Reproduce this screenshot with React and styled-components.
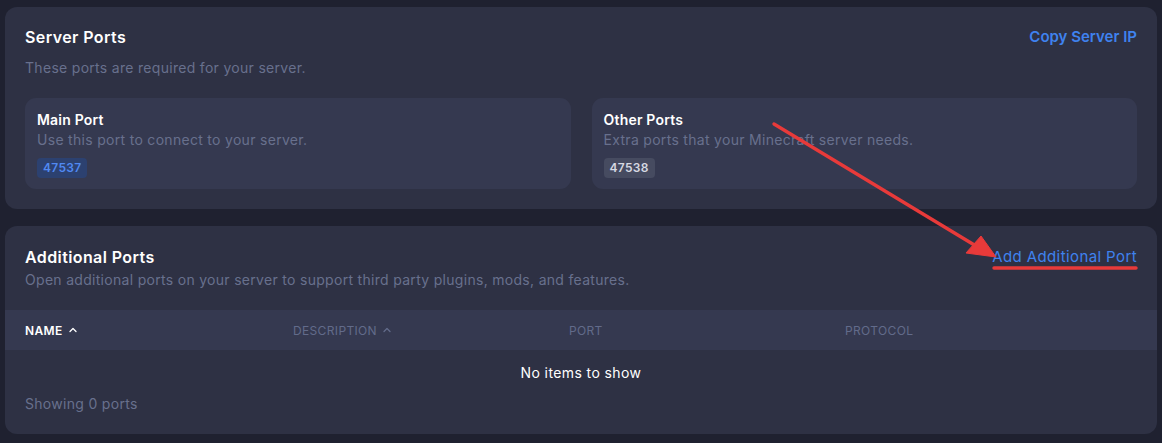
import styled, { createGlobalStyle } from "styled-components";

const GlobalStyle = createGlobalStyle`
    body{
        margin: 0;
        background: #1f2130;
        font-family: Inter, "Open Sans", sans-serif;
    }
`

function ChevronUp(){
    return(
        <svg width="10" height="10" viewBox="0 0 10 10" fill="none">
            <path d="M2 6.5 L5 3.5 L8 6.5" stroke="currentColor" strokeWidth="1.3" strokeLinecap="round" strokeLinejoin="round"/>
        </svg>
    )
}

function Annotation(){ //빨간 화살표 + 밑줄
    return(
        <Overlay width="1162" height="443" viewBox="0 0 1162 443">
            <line x1="774" y1="124" x2="976" y2="246" stroke="#e83a3a" strokeWidth="3.4" strokeLinecap="round"/>
            <polygon points="996,257 966,253 981,236" fill="#e83a3a" stroke="#e83a3a" strokeWidth="1" strokeLinejoin="round"/>
            <line x1="994" y1="268" x2="1136" y2="268" stroke="#e83a3a" strokeWidth="3.4" strokeLinecap="round"/>
        </Overlay>
    )
}

function App(){
    return(
        <>
            <GlobalStyle/>
            <Page>
                <Card>
                    <HeadRow>
                        <Title>Server Ports</Title>
                        <Link>Copy Server IP</Link>
                    </HeadRow>
                    <Desc $top="11px">These ports are required for your server.</Desc>
                    <PortGrid>
                        <PortCard>
                            <PortTitle>Main Port</PortTitle>
                            <Desc>Use this port to connect to your server.</Desc>
                            <Badge $blue>47537</Badge>
                        </PortCard>
                        <PortCard>
                            <PortTitle>Other Ports</PortTitle>
                            <Desc>Extra ports that your Minecraft server needs.</Desc>
                            <Badge>47538</Badge>
                        </PortCard>
                    </PortGrid>
                </Card>
                <Card $flush>
                    <HeadRow $pad>
                        <div>
                            <Title>Additional Ports</Title>
                            <Desc $top="3px">Open additional ports on your server to support third party plugins, mods, and features.</Desc>
                        </div>
                        <Link $light>Add Additional Port</Link>
                    </HeadRow>
                    <TableHead>
                        <Th $active>NAME <ChevronUp/></Th>
                        <Th>DESCRIPTION <ChevronUp/></Th>
                        <Th>PORT</Th>
                        <Th>PROTOCOL</Th>
                    </TableHead>
                    <Empty>No items to show</Empty>
                    <Footer>Showing 0 ports</Footer>
                </Card>
            </Page>
            <Annotation/>
        </>
    )
}

const Page=styled.div`
    display: flex;
    flex-direction: column;
    gap: 17px;
    padding: 7px 5px 9px 5px;
`
const Card=styled.div`
    background: #2e3144;
    border-radius: 12px;
    padding: ${(props)=>props.$flush ? "21px 0 20px" : "20px 20px 20px"};
`
const HeadRow=styled.div`
    display: flex;
    justify-content: space-between;
    align-items: flex-start;
    padding: ${(props)=>props.$pad ? "0 20px" : "0"};
`
const Title=styled.div`
    color: #ffffff;
    font-size: 16px;
    font-weight: 600;
    line-height: 20px;
    letter-spacing: 0.4px;
`
const Link=styled.a`
    color: #3f82ef;
    font-size: 15px;
    font-weight: ${(props)=>props.$light ? 400 : 600};
    line-height: 20px;
    letter-spacing: ${(props)=>props.$light ? "0.4px" : "0"};
    cursor: pointer;
`
const Desc=styled.div`
    color: #68708d;
    font-size: 14px;
    line-height: 20px;
    letter-spacing: 0.3px;
    margin-top: ${(props)=>props.$top || "0"};
`
const PortGrid=styled.div`
    display: grid;
    grid-template-columns: 1fr 1fr;
    gap: 21px;
    margin-top: 20px;
`
const PortCard=styled.div`
    background: #353950;
    border-radius: 11px;
    padding: 12px 12px 11px;
    display: flex;
    flex-direction: column;
    align-items: flex-start;
`
const PortTitle=styled.div`
    color: #ffffff;
    font-size: 14px;
    font-weight: 600;
    line-height: 20px;
    letter-spacing: 0.2px;
`
const Badge=styled.span`
    margin-top: 8px;
    padding: 0 6px;
    height: 20px;
    line-height: 20px;
    border-radius: 4px;
    font-size: 12px;
    font-weight: 600;
    letter-spacing: 0.3px;
    background: ${(props)=>props.$blue ? "#2c4170" : "#464b60"};
    color: ${(props)=>props.$blue ? "#5189f2" : "#d6d9e2"};
`
const TableHead=styled.div`
    display: grid;
    grid-template-columns: 268px 276px 276px 1fr;
    margin-top: 20px;
    padding: 0 20px;
    height: 40px;
    align-items: center;
    background: #353950;
`
const Th=styled.div`
    display: flex;
    align-items: center;
    gap: 5px;
    font-size: 12px;
    letter-spacing: 0.35px;
    font-weight: ${(props)=>props.$active ? 600 : 400};
    color: ${(props)=>props.$active ? "#ffffff" : "#626b8a"};
`
const Empty=styled.div`
    height: 44px;
    display: flex;
    align-items: center;
    justify-content: center;
    color: #ffffff;
    font-size: 14px;
    letter-spacing: 0.4px;
`
const Footer=styled.div`
    padding: 0 20px;
    color: #68708d;
    font-size: 14px;
    line-height: 20px;
    letter-spacing: 0.3px;
`
const Overlay=styled.svg`
    position: absolute;
    top: 0;
    left: 0;
    pointer-events: none;
`
export default App;
